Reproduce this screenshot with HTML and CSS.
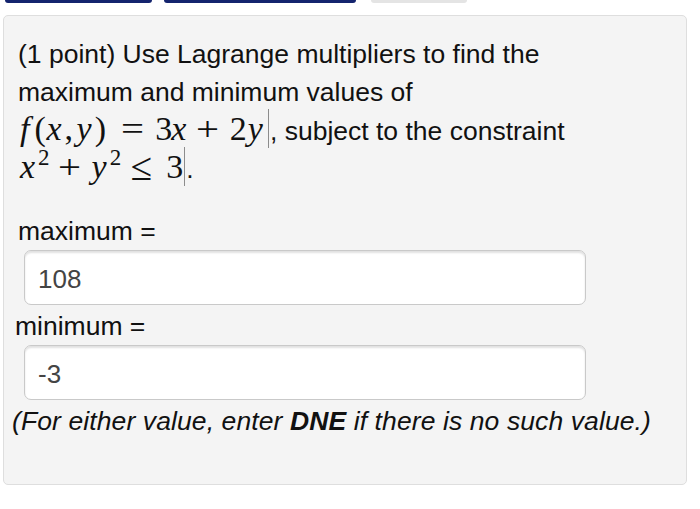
FILE: index.html
```html
<!DOCTYPE html>
<html>
<head>
<meta charset="utf-8">
<link rel="stylesheet" href="styles.css">
</head>
<body>
<div class="tabs">
  <div class="tab dark t1"></div>
  <div class="tab dark t2"></div>
  <div class="tab light t3"></div>
</div>
<div class="panel">
  <p class="problem">(1 point) Use Lagrange multipliers to find the<br>maximum and minimum values of<br><span class="math"><i class="fn">f</i>(<i class="ml-07">x</i><span class="ml-3">,</span><i class="ml-35">y</i><span class="ml-3">)</span><span class="op ml-17">=</span><span class="ml-13">3</span><i class="ml-n1">x</i><span class="op ml-12">+</span><span class="ml-124">2</span><i class="ml-1">y</i></span><span class="caret c1"></span>, subject to the constraint<br><span class="math"><i class="ml-2">x</i><sup class="ml-3">2</sup><span class="op ml-104">+</span><i class="ml-124">y</i><sup class="ml-3">2</sup><span class="op le ml-11">≤</span><span class="ml-15">3</span></span><span class="caret"></span>.</p>
  <div class="label l1">maximum =</div>
  <div class="field f1">108</div>
  <div class="label l2">minimum =</div>
  <div class="field f2">-3</div>
  <p class="note">(For either value, enter <b>DNE</b> if there is no such value.)</p>
</div>
</body>
</html>
```
FILE: styles.css
```css
html, body {
  margin: 0;
  padding: 0;
  background: #ffffff;
}
body {
  width: 700px;
  height: 509px;
  overflow: hidden;
  font-family: "Liberation Sans", Arial, sans-serif;
  color: #111;
}
.tabs {
  display: flex;
  height: 3px;
  padding-left: 5px;
  gap: 12px;
}
.tab {
  height: 3px;
  border-radius: 0 0 4px 4px;
}
.dark { background: #14246e; }
.light { background: #e4e4e4; }
.t1 { width: 147px; }
.t2 { width: 192px; }
.t3 { width: 96px; margin-left: 3px; }

.panel {
  margin: 12px 0 0 3px;
  width: 684px;
  height: 470px;
  background: #f4f4f4;
  border: 1px solid #dedede;
  border-radius: 5px;
  box-sizing: border-box;
  padding: 18.5px 0 0 14px;
}
.problem {
  margin: 0;
  font-size: 26.5px;
  line-height: 38.5px;
}

/* math typesetting */
.math {
  font-family: "Liberation Serif", "DejaVu Serif", serif;
  font-size: 34px;
  line-height: 0.9;
}
.math i { font-style: italic; }
.math sup {
  font-size: 23px;
  line-height: 0;
  vertical-align: 13px;
}
.op {
  display: inline-block;
  transform: scaleX(1.2);
}
.le { transform: scale(1.15); }
.fn { margin: 0 5px 0 2px; }
.ml-07 { margin-left: 0.7px; }
.ml-1 { margin-left: 1px; }
.ml-n1 { margin-left: -1px; }
.ml-2 { margin-left: 2px; }
.ml-3 { margin-left: 3px; }
.ml-35 { margin-left: 3.5px; }
.ml-12 { margin-left: 12px; }
.ml-13 { margin-left: 13px; }
.ml-104 { margin-left: 10.4px; }
.ml-11 { margin-left: 11.2px; }
.ml-124 { margin-left: 12.4px; }
.ml-15 { margin-left: 15.2px; }
.ml-17 { margin-left: 17px; }

.caret {
  display: inline-block;
  width: 1px;
  height: 39px;
  margin: -10px 1px 0 1px;
  background: #8c8c8c;
  vertical-align: -8px;
}
.c1 { margin-left: 5px; }

.label {
  font-size: 26.5px;
  line-height: 28px;
}
.l1 { margin: 28.7px 0 0 0; }
.l2 { margin: 7.2px 0 0 -3px; }
.field {
  width: 562px;
  height: 55px;
  box-sizing: border-box;
  background: #fff;
  border: 1px solid #c9c9c9;
  border-radius: 7px;
  box-shadow: inset 0 2px 2px rgba(0,0,0,0.12);
  font-size: 26px;
  color: #444;
  padding: 4px 0 0 13px;
  display: flex;
  align-items: center;
}
.f1 { margin: 4.8px 0 0 6px; }
.f2 { margin: 4.8px 0 0 6px; }
.note {
  margin: 7.2px 0 0 -6px;
  font-size: 26.5px;
  line-height: 28px;
  font-style: italic;
  letter-spacing: 0.1px;
}
```
